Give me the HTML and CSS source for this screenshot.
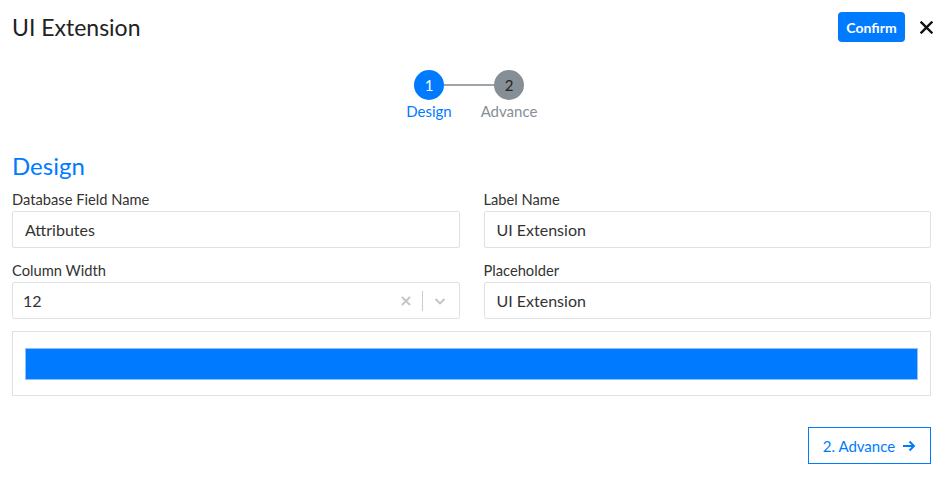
FILE: index.html
```html
<!DOCTYPE html>
<html lang="en">
<head>
  <meta charset="UTF-8" />
  <title>UI Extension</title>
  <link rel="stylesheet" href="styles.css">
</head>
<body>
  <div class="modal">
    <header class="modal-head">
      <h1>UI Extension</h1>
      <div class="head-actions">
        <button class="btn-confirm">Confirm</button>
        <button class="btn-close" aria-label="Close">
          <svg width="13" height="13" viewBox="0 0 13 13"><path d="M1.5 1.5 L11.5 11.5 M11.5 1.5 L1.5 11.5" stroke="#111" stroke-width="2.4" stroke-linecap="square"/></svg>
        </button>
      </div>
    </header>

    <div class="stepper">
      <div class="step active">
        <div class="dot">1</div>
        <span>Design</span>
      </div>
      <div class="step-line"></div>
      <div class="step">
        <div class="dot">2</div>
        <span>Advance</span>
      </div>
    </div>

    <h2 class="section-title">Design</h2>

    <div class="form-grid">
      <div class="field">
        <label>Database Field Name</label>
        <div class="input">Attributes</div>
      </div>
      <div class="field">
        <label>Label Name</label>
        <div class="input">UI Extension</div>
      </div>
      <div class="field">
        <label>Column Width</label>
        <div class="input select">
          <span class="value">12</span>
          <span class="clear">
            <svg width="12" height="12" viewBox="0 0 12 12"><path d="M2 2 L10 10 M10 2 L2 10" stroke="#c4c4c4" stroke-width="1.8"/></svg>
          </span>
          <span class="sep"></span>
          <span class="chev">
            <svg width="14" height="14" viewBox="0 0 14 14"><path d="M2.5 5 L7 9.5 L11.5 5" fill="none" stroke="#c4c4c4" stroke-width="1.8"/></svg>
          </span>
        </div>
      </div>
      <div class="field">
        <label>Placeholder</label>
        <div class="input">UI Extension</div>
      </div>
    </div>

    <div class="preview">
      <div class="preview-bar"></div>
    </div>

    <div class="footer">
      <button class="btn-next">2. Advance
        <svg width="14" height="14" viewBox="0 0 14 14"><path d="M1 7 H12 M7.5 2.5 L12 7 L7.5 11.5" fill="none" stroke="#007bff" stroke-width="1.9"/></svg>
      </button>
    </div>
  </div>
</body>
</html>
```

FILE: styles.css
```css
:root {
  --azul: #007bff;
  --texto: #333;
  --gris: #868e96;
  --borde: #dfe1e5;
  --fuente: Lato, 'Open Sans', Arial, sans-serif;
}
* { box-sizing: border-box; margin: 0; padding: 0; }
body {
  font-family: var(--fuente);
  background: #fff;
  color: var(--texto);
}

.modal {
  width: 942px;
  padding: 0 11px 0 12px;
}

.modal-head {
  display: flex;
  justify-content: space-between;
  align-items: center;
  height: 54px;
}
.modal-head h1 {
  font-size: 23px;
  font-weight: 400;
  color: #222;
}
.head-actions {
  display: flex;
  align-items: center;
  gap: 14px;
}
.btn-confirm {
  background: var(--azul);
  color: #fff;
  border: none;
  border-radius: 4px;
  width: 67px;
  height: 30px;
  font-family: var(--fuente);
  font-size: 14px;
  font-weight: 700;
  cursor: pointer;
}
.btn-close {
  background: none;
  border: none;
  width: 14px;
  height: 14px;
  display: flex;
  align-items: center;
  justify-content: center;
  margin-right: -2px;
  cursor: pointer;
}

/* stepper */
.stepper {
  display: flex;
  justify-content: center;
  align-items: flex-start;
  margin-top: 16px;
  margin-left: -5px;
}
.step {
  display: flex;
  flex-direction: column;
  align-items: center;
  width: 60px;
}
.step .dot {
  width: 30px;
  height: 30px;
  border-radius: 50%;
  background: var(--gris);
  color: #222;
  font-size: 15px;
  display: flex;
  align-items: center;
  justify-content: center;
}
.step span {
  font-size: 15px;
  color: var(--gris);
  margin-top: 2px;
}
.step.active .dot { background: var(--azul); color: #fff; }
.step.active span { color: var(--azul); }
.step-line {
  width: 50px;
  height: 2px;
  background: #a0a4a8;
  margin: 14px -15px 0;
}

.section-title {
  font-size: 24px;
  font-weight: 400;
  color: var(--azul);
  margin-top: 31px;
  line-height: 30px;
}

/* form */
.form-grid {
  display: grid;
  grid-template-columns: 1fr 1fr;
  column-gap: 24px;
  row-gap: 13px;
  margin-top: 9px;
}
.field label {
  display: block;
  font-size: 14.7px;
  line-height: 19px;
  margin-bottom: 2px;
  color: #333;
}
.input {
  height: 37px;
  border: 1px solid var(--borde);
  border-radius: 2px;
  padding: 0 12px;
  font-size: 16px;
  display: flex;
  align-items: center;
  color: #333;
}
.select { padding: 0 0 0 10px; }
.select .value { flex: 1; }
.select .clear {
  display: flex;
  align-items: center;
  padding: 0 6px;
}
.select .sep {
  width: 1px;
  height: 20px;
  background: #ccc;
  margin: 0 4px;
}
.select .chev {
  display: flex;
  align-items: center;
  padding: 0 12px 0 6px;
}

/* preview */
.preview {
  margin-top: 12px;
  border: 1px solid var(--borde);
  padding: 16px 12px 15px;
}
.preview-bar {
  height: 32px;
  background: var(--azul);
  border: 1px solid #8fc1ff;
}

.footer {
  display: flex;
  justify-content: flex-end;
  margin-top: 31px;
}
.btn-next {
  display: flex;
  align-items: center;
  gap: 7px;
  width: 123px;
  height: 37px;
  justify-content: center;
  background: #fff;
  border: 1px solid var(--azul);
  border-radius: 0;
  color: var(--azul);
  font-family: var(--fuente);
  font-size: 15px;
  cursor: pointer;
}
```
